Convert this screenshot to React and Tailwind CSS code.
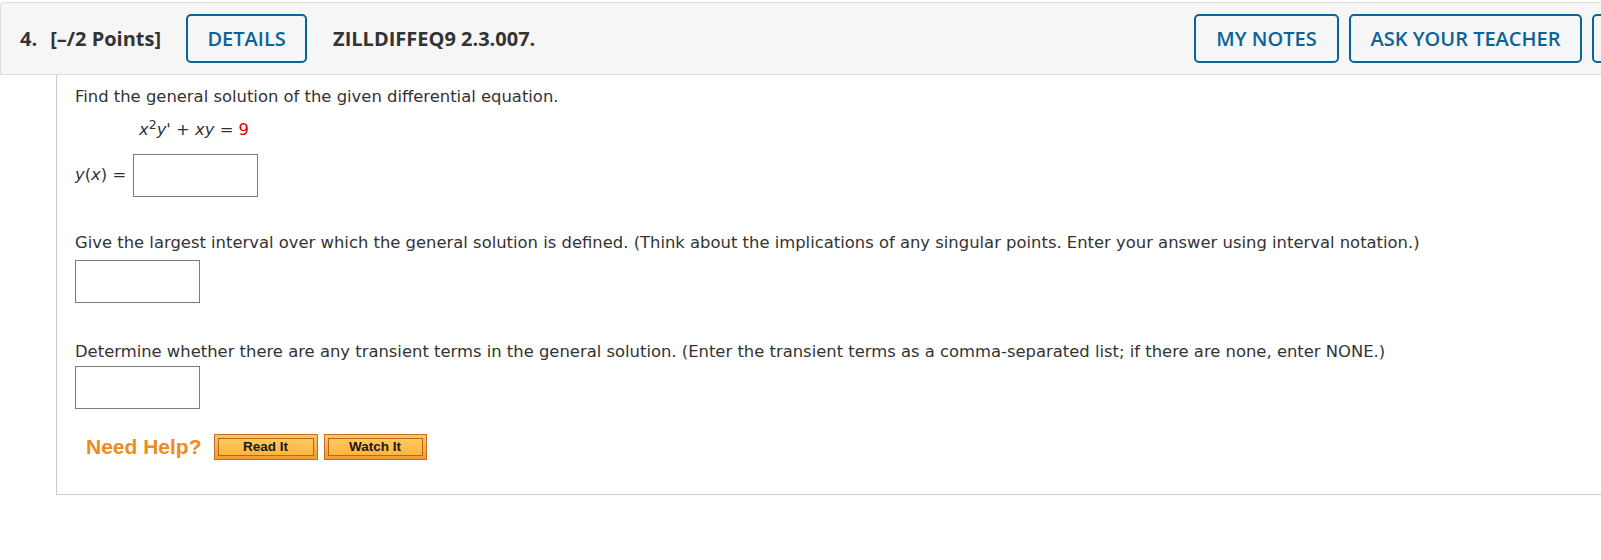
import { useState } from "react";

const HeaderButton = ({ children, className = "" }) => (
  <button
    className={`h-[49px] border-2 border-[#0b6399] rounded-[5px] text-[#0b6399] font-semibold text-[20px] ${className}`}
  >
    {children}
  </button>
);

const HelpButton = ({ label, width }) => (
  <button
    className={`h-[26px] ${width} border border-[#c2711a] bg-gradient-to-b from-[#fbc471] to-[#f29a2c] p-[3px]`}
  >
    <span className="flex h-full items-center justify-center border border-[#b66a19] bg-gradient-to-b from-[#ffc85e] to-[#fbb53c] text-[13.5px] font-bold text-[#1a1a1a] font-['Liberation_Sans',Arial,sans-serif]">
      {label}
    </span>
  </button>
);

const AnswerBox = ({ value, onChange }) => (
  <input
    value={value}
    onChange={(e) => onChange(e.target.value)}
    className="w-[125px] h-[43px] border border-[#7a7a7a] bg-white outline-none px-2"
  />
);

export default function App() {
  const [answers, setAnswers] = useState({ y: "", interval: "", transient: "" });
  const set = (key) => (val) => setAnswers((a) => ({ ...a, [key]: val }));

  return (
    <div className="w-[1601px] h-[560px] overflow-hidden bg-white pt-[2px]">
      {/* Header */}
      <div className="w-[1640px] h-[73px] flex items-center bg-[#f6f6f6] border border-[#dcdcdc] rounded-tl-[4px] font-['Open_Sans',sans-serif] text-[#333]">
        <span className="ml-[19px] font-bold text-[20px]">4.</span>
        <span className="ml-[13px] font-bold text-[20px]">[–/2 Points]</span>
        <HeaderButton className="ml-[25px] w-[121px]">DETAILS</HeaderButton>
        <span className="ml-[26px] font-bold text-[20px]">ZILLDIFFEQ9 2.3.007.</span>
        <div className="flex-1" />
        <HeaderButton className="w-[145px]">MY NOTES</HeaderButton>
        <HeaderButton className="ml-[10px] w-[233px]">ASK YOUR TEACHER</HeaderButton>
        <HeaderButton className="ml-[10px] w-[47px]">&nbsp;</HeaderButton>
      </div>

      {/* Question body */}
      <div className="ml-[56px] h-[420px] border-l border-b border-[#cccccc] pl-[18px] pt-[12px] font-['DejaVu_Sans',sans-serif] text-[16.4px] text-[#333]">
        <p className="leading-[20px]">Find the general solution of the given differential equation.</p>

        <p className="mt-[13px] ml-[64px] leading-[20px]">
          <i>x</i>
          <sup className="text-[12.5px]">2</sup>
          <i>y</i>' + <i>xy</i> = <span className="text-[#e00000]">9</span>
        </p>

        <div className="mt-[14px] flex items-center">
          <span className="mr-[7px]">
            <i>y</i>(<i>x</i>) =
          </span>
          <AnswerBox value={answers.y} onChange={set("y")} />
        </div>

        <p className="mt-[36px] leading-[20px]">
          Give the largest interval over which the general solution is defined. (Think about the implications of any singular points. Enter your answer using interval notation.)
        </p>
        <div className="mt-[7px]">
          <AnswerBox value={answers.interval} onChange={set("interval")} />
        </div>

        <p className="mt-[39px] leading-[20px]">
          Determine whether there are any transient terms in the general solution. (Enter the transient terms as a comma-separated list; if there are none, enter NONE.)
        </p>
        <div className="mt-[4px]">
          <AnswerBox value={answers.transient} onChange={set("transient")} />
        </div>

        {/* Need help */}
        <div className="mt-[25px] ml-[11px] flex items-center gap-[6px]">
          <span className="mr-[6px] text-[21px] leading-[24px] font-bold text-[#f08a1c] font-['Liberation_Sans',Arial,sans-serif]">
            Need Help?
          </span>
          <HelpButton label="Read It" width="w-[104px]" />
          <HelpButton label="Watch It" width="w-[103px]" />
        </div>
      </div>
    </div>
  );
}
